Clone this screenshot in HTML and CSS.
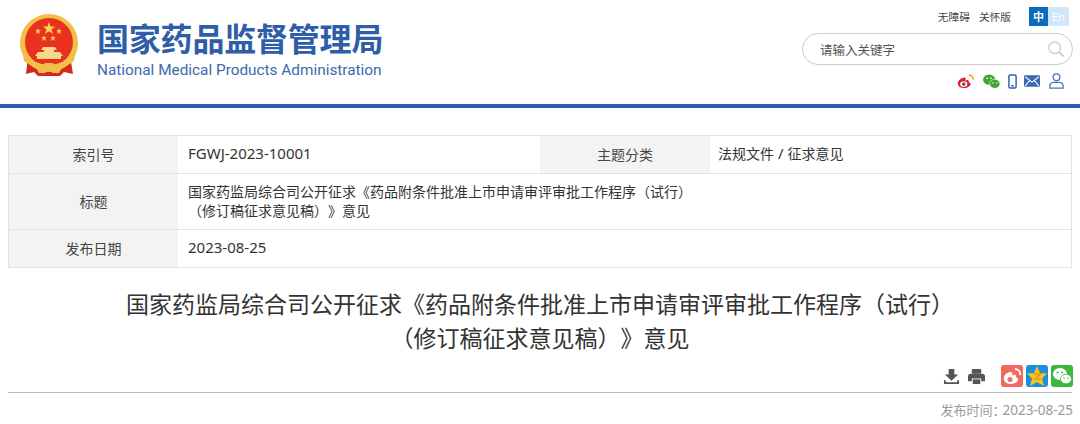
FILE: index.html
```html
<!DOCTYPE html>
<html lang="zh-CN">
<head>
    <meta charset="UTF-8">
    <title>国家药品监督管理局</title>
    <link rel="stylesheet" href="styles.css">
</head>
<body>
    <header class="header">
        <div class="brand">
            <svg class="emblem" viewBox="0 0 60 64">
                <path d="M9 42 L7 60 L15 58 L19 62 L41 62 L45 58 L54 60 L51 42 Z" fill="#d42a1c"/>
                <circle cx="30" cy="29" r="29" fill="#f2c04a"/>
                <circle cx="30" cy="28" r="24" fill="#e8321f"/>
                <polygon points="30,8 31.500,12.500 36,12.500 32.500,15.500 34,20 30,17.200 26,20 27.500,15.500 24,12.500 28.500,12.500" fill="#f8d25a"/>
                <polygon points="19,14 19.800,16.200 22,16.200 20.300,17.600 21,20 19,18.600 17,20 17.700,17.600 16,16.200 18.200,16.200" fill="#f8d25a"/>
                <polygon points="40,14 40.800,16.200 43,16.200 41.300,17.600 42,20 40,18.600 38,20 38.700,17.600 37,16.200 39.200,16.200" fill="#f8d25a"/>
                <polygon points="25,21 25.800,23.200 28,23.200 26.300,24.600 27,27 25,25.600 23,27 23.700,24.600 22,23.200 24.200,23.200" fill="#f8d25a"/>
                <polygon points="34,21 34.800,23.200 37,23.200 35.300,24.600 36,27 34,25.600 32,27 32.700,24.600 31,23.200 33.200,23.200" fill="#f8d25a"/>
                <path d="M24 33 H36 L38 36 H35 V38 H41 L44 42 H16 L19 38 H25 V36 H22 Z" fill="#f7d98c"/>
                <rect x="18" y="42" width="24" height="3" fill="#f7d98c"/>
                <path d="M4 40 Q30 62 56 40 L55 47 Q30 66 5 47 Z" fill="#f2c04a"/>
                <path d="M16 52 h8 l2 -3 h8 l2 3 h8 l-4 7 h-6 l-4 -3 l-4 3 h-6 Z" fill="#f2c04a"/>
            </svg>
            <div class="brand-text">
                <div class="brand-name">国家药品监督管理局</div>
                <div class="brand-en">National Medical Products Administration</div>
            </div>
        </div>
        <div class="tools">
            <div class="top-links">
                <a>无障碍</a>
                <a>关怀版</a>
                <div class="lang">
                    <span class="lang-zh">中</span>
                    <span class="lang-en">En</span>
                </div>
            </div>
            <div class="search">
                <span class="search-text">请输入关键字</span>
                <svg class="search-icon" viewBox="0 0 20 20">
                    <circle cx="8.500" cy="8.500" r="6.500" fill="none" stroke="#ccc" stroke-width="1.500"/>
                    <path d="M13.500 13.500 L18.500 18.500" stroke="#ccc" stroke-width="2"/>
                </svg>
            </div>
            <div class="social">
                <svg class="ico-weibo" viewBox="0 0 20 18">
                    <path d="M8 5 C3 6 0 10 1 13 C2 17 8 18 12 16 C16 14 16 11 13 10.500 C14 8 12 7 9 8.500 C10 6 10 5 8 5 Z" fill="#e6162d"/>
                    <ellipse cx="7.500" cy="12.500" rx="4" ry="3.200" fill="#fff"/>
                    <circle cx="7.500" cy="12.500" r="2" fill="#555"/>
                    <path d="M13 2 A5 5 0 0 1 18 7.500" fill="none" stroke="#f5a623" stroke-width="2"/>
                </svg>
                <svg class="ico-wechat" viewBox="0 0 18 16">
                    <ellipse cx="6.500" cy="6" rx="6.500" ry="5.500" fill="#3fa62f"/>
                    <ellipse cx="12.500" cy="10.500" rx="5.500" ry="4.800" fill="#3fa62f" stroke="#fff" stroke-width="0.600"/>
                    <circle cx="4.500" cy="4.500" r="0.900" fill="#fff"/>
                    <circle cx="8.500" cy="4.500" r="0.900" fill="#fff"/>
                    <circle cx="10.500" cy="9.500" r="0.800" fill="#fff"/>
                    <circle cx="14.500" cy="9.500" r="0.800" fill="#fff"/>
                </svg>
                <svg class="ico-phone" viewBox="0 0 10 16">
                    <rect x="1" y="0.800" width="8" height="14.400" rx="1.500" fill="none" stroke="#2f5ea8" stroke-width="1.600"/>
                    <rect x="3.500" y="12" width="3" height="1.500" fill="#2f5ea8"/>
                </svg>
                <svg class="ico-mail" viewBox="0 0 15 11">
                    <rect width="15" height="11" rx="1" fill="#3b68b0"/>
                    <path d="M1 1.500 L7.500 6.500 L14 1.500 M1 10 L5.500 5 M14 10 L9.500 5" fill="none" stroke="#fff" stroke-width="1"/>
                </svg>
                <svg class="ico-user" viewBox="0 0 16 17">
                    <circle cx="8" cy="4.500" r="3.600" fill="none" stroke="#4a72b8" stroke-width="1.400"/>
                    <path d="M1 16 V13.500 Q1 10.500 5 10 H11 Q15 10.500 15 13.500 V16 Z" fill="none" stroke="#4a72b8" stroke-width="1.400"/>
                </svg>
            </div>
        </div>
    </header>

    <main class="content">
        <div class="info">
            <div class="info-label">索引号</div>
            <div class="info-value num">FGWJ-2023-10001</div>
            <div class="info-label">主题分类</div>
            <div class="info-value info-side">法规文件<span class="num"> / </span>征求意见</div>

            <div class="info-label">标题</div>
            <div class="info-value info-wide">国家药监局综合司公开征求《药品附条件批准上市申请审评审批工作程序（试行）<br>（修订稿征求意见稿）》意见</div>

            <div class="info-label">发布日期</div>
            <div class="info-value info-wide num">2023-08-25</div>
        </div>

        <h1 class="title">国家药监局综合司公开征求《药品附条件批准上市申请审评审批工作程序（试行）<br>（修订稿征求意见稿）》意见</h1>

        <div class="actions">
            <svg class="act-icon" viewBox="0 0 18 18">
                <path d="M6 1 H12 V7 H16 L9 13.500 L2 7 H6 Z" fill="#555"/>
                <path d="M1 13 V17 H17 V13 H15 V15 H3 V13 Z" fill="#555"/>
            </svg>
            <svg class="act-icon" viewBox="0 0 18 18">
                <rect x="4" y="1" width="10" height="5" rx="1" fill="#555"/>
                <path d="M3 6 H15 Q18 6 18 9 V14 H14 V11 H4 V14 H0 V9 Q0 6 3 6 Z" fill="#555"/>
                <rect x="5" y="12" width="8" height="5" fill="#555"/>
            </svg>
            <div class="shares">
                <div class="share share-weibo">
                    <svg viewBox="0 0 22 22">
                        <path d="M9 7 C4 8 2 12 3 15 C4 19 10 20 14 18 C18 16 18 13 15 12.500 C16 10 14 9 11 10.500 C12 8 11 7 9 7 Z" fill="#fff"/>
                        <circle cx="9" cy="14.500" r="2.500" fill="#f06a5d"/>
                        <path d="M14 4 A5 5 0 0 1 19 10" fill="none" stroke="#fff" stroke-width="1.800"/>
                    </svg>
                </div>
                <div class="share share-qzone">
                    <svg viewBox="0 0 22 22">
                        <polygon points="11,1 14,8 21,8.500 16,13.500 18,21 11,17 4,21 6,13.500 1,8.500 8,8" fill="#fcc21b"/>
                        <path d="M7 9 H15 L9 14 H15" fill="none" stroke="#e8a010" stroke-width="1.600"/>
                    </svg>
                </div>
                <div class="share share-wechat">
                    <svg viewBox="0 0 22 22">
                        <ellipse cx="9" cy="9" rx="7" ry="6" fill="#fff"/>
                        <ellipse cx="15" cy="14" rx="5.500" ry="4.800" fill="#fff" stroke="#3fb53f" stroke-width="0.800"/>
                        <circle cx="6.500" cy="7.500" r="1" fill="#3fb53f"/>
                        <circle cx="11" cy="7.500" r="1" fill="#3fb53f"/>
                        <circle cx="13" cy="13" r="0.800" fill="#3fb53f"/>
                        <circle cx="17" cy="13" r="0.800" fill="#3fb53f"/>
                    </svg>
                </div>
            </div>
        </div>

        <div class="publish">发布时间：<span class="publish-date">2023-08-25</span></div>
    </main>
</body>
</html>
```

FILE: styles.css
```css
body {
    margin: 0;
    background: #fff;
    color: #333;
    font-family: "Noto Sans", "Noto Sans CJK SC", sans-serif;
    text-spacing-trim: space-all;
    overflow: hidden;
}

/* 头部 */
.header {
    display: flex;
    justify-content: space-between;
    height: 104px;
    border-bottom: 4px solid #2f5ea8;
}
.brand {
    display: flex;
    padding: 14px 0 0 19px;
}
.emblem {
    width: 60px;
    height: 64px;
}
.brand-text {
    margin-left: 18px;
    padding-top: 3px;
}
.brand-name {
    font-family: "Noto Sans CJK SC", sans-serif;
    font-size: 32px;
    line-height: 40px;
    font-weight: 700;
    letter-spacing: -0.2px;
    color: #2f5ea8;
}
.brand-en {
    margin-top: 3px;
    font-family: "Roboto", sans-serif;
    font-size: 15.350px;
    line-height: 20px;
    color: #3d69ad;
    white-space: nowrap;
}
.tools {
    width: 271px;
    margin-right: 7px;
}
.top-links {
    display: flex;
    align-items: center;
    justify-content: flex-end;
    height: 19px;
    margin-top: 7px;
    font-size: 10.700px;
    color: #444;
}
.top-links a {
    margin-right: 9px;
}
.lang {
    display: flex;
    margin-left: 9px;
    margin-right: 4px;
    font-size: 11px;
    line-height: 19px;
    text-align: center;
}
.lang-zh {
    width: 19px;
    background: #0b6bbd;
    color: #fff;
    font-weight: 700;
}
.lang-en {
    width: 21px;
    background: #cfe6fb;
    color: #fff;
}
.search {
    display: flex;
    align-items: center;
    justify-content: space-between;
    height: 32px;
    margin-top: 7px;
    padding: 0 7px 0 17px;
    border: 1px solid #ccc;
    border-radius: 16px;
    box-sizing: border-box;
    font-size: 12.500px;
    color: #555;
}
.search-icon {
    width: 18px;
    height: 18px;
}
.social {
    display: flex;
    align-items: center;
    justify-content: flex-end;
    gap: 8px;
    height: 18px;
    margin-top: 7px;
    padding-right: 9px;
}
.ico-weibo { width: 18px; height: 16px; }
.ico-wechat { width: 17px; height: 15px; }
.ico-phone { width: 9px; height: 15px; }
.ico-mail { width: 16px; height: 12px; margin-left: -1px; }
.ico-user { width: 15px; height: 16px; margin-left: 1px; }

/* 内容 */
.content {
    padding: 27px 8px 0;
}
.info {
    display: grid;
    grid-template-columns: 169px 362px 170px 1fr;
    grid-template-rows: 38px 56px 37px;
    border: 1px solid #e3e3e3;
    font-size: 14px;
    line-height: 19px;
}
.info-label {
    display: flex;
    align-items: center;
    justify-content: center;
    background: #f3f3f3;
    color: #444;
    border-bottom: 1px solid #e3e3e3;
}
.info-value {
    padding: 8px 10px 0;
    border-bottom: 1px solid #e3e3e3;
}
.info-side {
    padding-left: 8px;
}
.info-wide {
    grid-column: 2 / 5;
}
.info > :nth-last-child(-n+2) {
    border-bottom: none;
}
.num {
    font-size: 15px;
}
.title {
    margin: 19px 0 0;
    font-size: 23px;
    line-height: 34px;
    font-weight: 400;
    text-align: center;
    color: #333;
}
.actions {
    display: flex;
    align-items: center;
    justify-content: flex-end;
    gap: 8px;
    height: 26px;
    margin-top: 8px;
    padding-bottom: 3px;
    border-bottom: 1px solid #bbb;
}
.act-icon {
    width: 17px;
    height: 17px;
}
.shares {
    display: flex;
    gap: 3px;
    margin-left: 8px;
    margin-right: -1px;
}
.share {
    width: 22px;
    height: 22px;
    border-radius: 3px;
}
.share svg {
    display: block;
}
.share-weibo { background: #f06a5d; }
.share-qzone { background: #1c8ee0; }
.share-wechat { background: #3fb53f; }
.publish {
    margin-top: 8px;
    margin-right: -1px;
    font-size: 13px;
    line-height: 18px;
    text-align: right;
    color: #999;
}
.publish-date {
    margin-left: -3px;
    font-size: 13.500px;
}
```
